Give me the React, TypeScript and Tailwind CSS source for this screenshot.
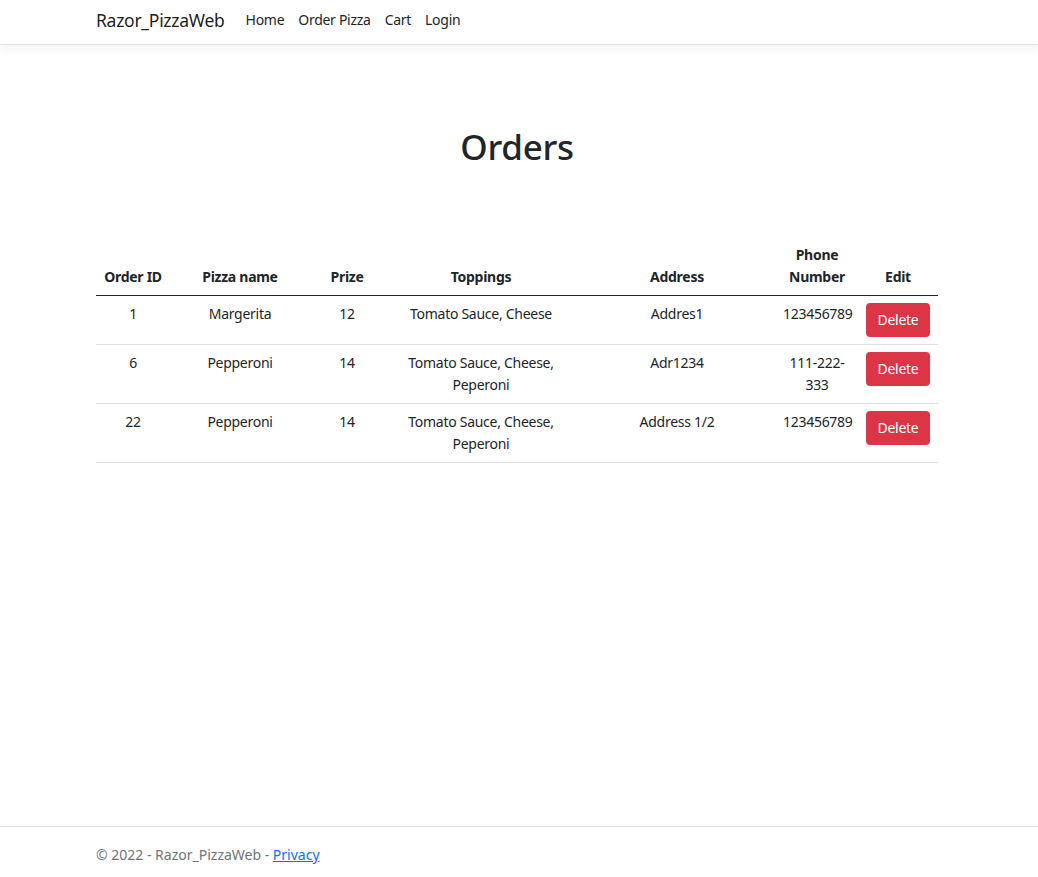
const orders = [
  { id: 1, name: 'Margerita', prize: 12, toppings: 'Tomato Sauce, Cheese', address: 'Addres1', phone: '123456789' },
  { id: 6, name: 'Pepperoni', prize: 14, toppings: 'Tomato Sauce, Cheese, Peperoni', address: 'Adr1234', phone: '111-222-333' },
  { id: 22, name: 'Pepperoni', prize: 14, toppings: 'Tomato Sauce, Cheese, Peperoni', address: 'Address 1/2', phone: '123456789' },
]

export default function App() {
  return (
    <div className="flex h-[886px] flex-col bg-white text-[14px] leading-[22px] tracking-[-0.02em] text-[#212529] font-['Noto_Sans',sans-serif]">
      {/* Navbar */}
      <header className="h-[45px] shrink-0 border-b border-[#dee2e6] shadow-[0_3.5px_10.5px_rgba(0,0,0,0.05)]">
        <nav className="ml-[96px] flex h-full w-[842px] items-center pb-[4px]">
          <a className="mr-[14px] text-[17.5px] text-[rgba(0,0,0,0.9)]">Razor_PizzaWeb</a>
          <ul className="flex">
            {['Home', 'Order Pizza', 'Cart', 'Login'].map(l => (
              <li key={l}>
                <a className="block px-[7px] text-[#212529]">{l}</a>
              </li>
            ))}
          </ul>
        </nav>
      </header>

      {/* Main */}
      <main className="ml-[96px] w-[842px] flex-1">
        <h1 className="mt-[81px] text-center text-[35px] font-medium leading-[42px]">Orders</h1>

        <table className="mt-[69px] w-full table-fixed border-collapse text-center">
          <colgroup>
            <col className="w-[74px]" />
            <col className="w-[140px]" />
            <col className="w-[74px]" />
            <col className="w-[194px]" />
            <col className="w-[198px]" />
            <col className="w-[82px]" />
            <col className="w-[80px]" />
          </colgroup>
          <thead className="align-bottom">
            <tr className="border-b-[1.5px] border-[#212529]">
              {['Order ID', 'Pizza name', 'Prize', 'Toppings', 'Address', 'Phone Number', 'Edit'].map(h => (
                <th key={h} className="p-[7px] font-bold">{h}</th>
              ))}
            </tr>
          </thead>
          <tbody className="align-top">
            {orders.map(o => (
              <tr key={o.id} className="border-b border-[#dee2e6]">
                <td className="p-[7px]">{o.id}</td>
                <td className="p-[7px]">{o.name}</td>
                <td className="p-[7px]">{o.prize}</td>
                <td className="p-[7px]">{o.toppings}</td>
                <td className="p-[7px]">{o.address}</td>
                <td className="p-[7px]">{o.phone}</td>
                <td className="p-[7px]">
                  <button className="rounded-[3.5px] border border-[#dc3545] bg-[#dc3545] px-[11px] py-[5px] text-white">
                    Delete
                  </button>
                </td>
              </tr>
            ))}
          </tbody>
        </table>
      </main>

      {/* Footer */}
      <footer className="h-[60px] shrink-0 border-t border-[#dee2e6] leading-[56px] tracking-normal text-[#6c757d]">
        <div className="ml-[96px] w-[842px]">
          © 2022 - Razor_PizzaWeb - <a className="text-[#0d6efd] underline">Privacy</a>
        </div>
      </footer>
    </div>
  )
}
